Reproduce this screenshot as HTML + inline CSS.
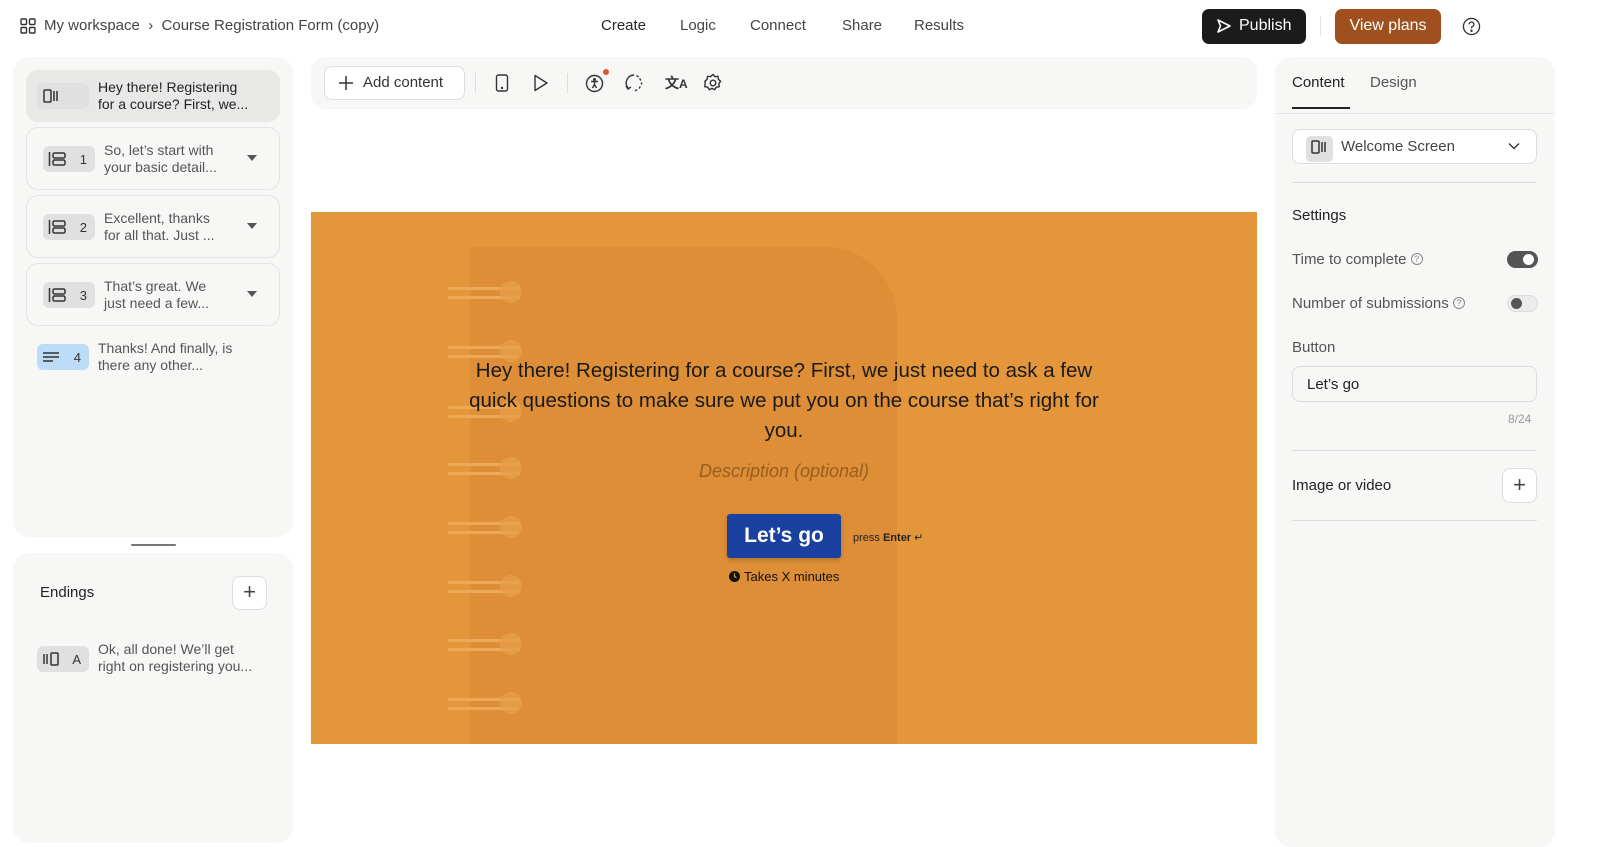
<!DOCTYPE html>
<html><head><meta charset="utf-8"><style>
*{box-sizing:border-box;margin:0;padding:0}
body{width:1600px;height:830px;background:#fff;font-family:"Liberation Sans",Arial,sans-serif;color:#222;position:relative;overflow:hidden}
.abs{position:absolute}
.panel{background:#f7f7f6;border-radius:16px}
.nav{font-size:15px;color:#262626}
.item{position:absolute;left:26px;width:254px;border-radius:12px;font-size:14px;color:#555;line-height:17px}
.item.b{border:1px solid #e3e3e3}
.badge{position:absolute;background:#e0e0e0;border-radius:6px;height:26px;width:52px}
.badge span{position:absolute;right:8px;top:5px;font-size:13px;color:#333}
.txt{position:absolute;left:77px}
.caret{position:absolute;right:22px;top:27px;width:0;height:0;border-left:5px solid transparent;border-right:5px solid transparent;border-top:6px solid #555}
.lbl{position:absolute;left:1292px;font-size:15px;color:#555}
.spiral{position:absolute;left:448px;width:72px;height:20px}
.spiral i{position:absolute;left:0;width:72px;height:3px;background:#eda858;border-radius:2px}
.spiral b{position:absolute;left:52px;top:-2px;width:22px;height:22px;border-radius:50%;background:#e79f4a;opacity:.8}
</style></head><body>
<svg class="abs" style="left:20px;top:18px" width="16" height="16" viewBox="0 0 16 16" fill="none" stroke="#333" stroke-width="1.4"><rect x="1" y="1" width="5.5" height="5.5" rx="1"/><rect x="9.5" y="1" width="5.5" height="5.5" rx="1"/><rect x="1" y="9.5" width="5.5" height="5.5" rx="1"/><rect x="9.5" y="9.5" width="5.5" height="5.5" rx="1"/></svg>
<div class="abs nav" style="left:44px;top:17px;color:#444">My workspace&nbsp;&nbsp;›&nbsp;&nbsp;Course Registration Form (copy)</div>
<div class="abs nav" style="left:601px;top:17px">Create</div>
<div class="abs nav" style="left:680px;top:17px;color:#444">Logic</div>
<div class="abs nav" style="left:750px;top:17px;color:#444">Connect</div>
<div class="abs nav" style="left:842px;top:17px;color:#444">Share</div>
<div class="abs nav" style="left:914px;top:17px;color:#444">Results</div>
<div class="abs" style="left:1202px;top:9px;width:104px;height:35px;background:#1b1b1b;border-radius:7px;color:#fff;font-size:16px;padding:8px 0 0 37px">Publish</div>
<svg class="abs" style="left:1216px;top:18px" width="16" height="16" viewBox="0 0 16 16" fill="none" stroke="#fff" stroke-width="1.6" stroke-linejoin="round"><path d="M2 2l12 6-12 6 2.5-6z"/></svg>
<div class="abs" style="left:1320px;top:16px;width:1px;height:20px;background:#e3e3e3"></div>
<div class="abs" style="left:1335px;top:9px;width:106px;height:35px;background:#a0501f;border-radius:7px;color:#fff;font-size:16px;text-align:center;padding-top:8px">View plans</div>
<svg class="abs" style="left:1462px;top:17px" width="19" height="19" viewBox="0 0 20 20" fill="none" stroke="#333" stroke-width="1.4"><circle cx="10" cy="10" r="8.5"/><path d="M7.5 7.8a2.5 2.5 0 1 1 3.3 2.3c-.6.3-.8.7-.8 1.4v.5"/><circle cx="10" cy="14.5" r=".6" fill="#333"/></svg>

<div class="abs panel" style="left:13px;top:57px;width:280px;height:480px"></div>
<div class="item" style="top:70px;height:52px;background:#e8e8e7">
 <div class="badge" style="left:11px;top:13px"></div>
 <svg class="abs" style="left:17px;top:19px" width="18" height="14" viewBox="0 0 18 14" fill="none" stroke="#333" stroke-width="1.5"><rect x="1" y="1" width="7" height="12" rx="1"/><path d="M11 2v10M14 2v10"/></svg>
 <div class="txt" style="left:72px;top:9px;color:#222">Hey there! Registering<br>for a course? First, we...</div>
</div>
<div class="item b" style="top:127px;height:63px">
 <div class="badge" style="left:16px;top:18px"><span>1</span></div>
 <svg class="abs" style="left:21px;top:24px" width="18" height="14" viewBox="0 0 18 14" fill="none" stroke="#333" stroke-width="1.5"><path d="M1.5 0v14"/><rect x="5" y="1" width="12" height="5" rx="1.5"/><rect x="5" y="8" width="12" height="5" rx="1.5"/></svg>
 <div class="txt" style="top:14px">So, let’s start with<br>your basic detail...</div><div class="caret"></div>
</div>
<div class="item b" style="top:195px;height:63px">
 <div class="badge" style="left:16px;top:18px"><span>2</span></div>
 <svg class="abs" style="left:21px;top:24px" width="18" height="14" viewBox="0 0 18 14" fill="none" stroke="#333" stroke-width="1.5"><path d="M1.5 0v14"/><rect x="5" y="1" width="12" height="5" rx="1.5"/><rect x="5" y="8" width="12" height="5" rx="1.5"/></svg>
 <div class="txt" style="top:14px">Excellent, thanks<br>for all that. Just ...</div><div class="caret"></div>
</div>
<div class="item b" style="top:263px;height:63px">
 <div class="badge" style="left:16px;top:18px"><span>3</span></div>
 <svg class="abs" style="left:21px;top:24px" width="18" height="14" viewBox="0 0 18 14" fill="none" stroke="#333" stroke-width="1.5"><path d="M1.5 0v14"/><rect x="5" y="1" width="12" height="5" rx="1.5"/><rect x="5" y="8" width="12" height="5" rx="1.5"/></svg>
 <div class="txt" style="top:14px">That’s great. We<br>just need a few...</div><div class="caret"></div>
</div>
<div class="item" style="top:331px;height:52px">
 <div class="badge" style="left:11px;top:13px;background:#bcdcf7"><span>4</span></div>
 <svg class="abs" style="left:17px;top:21px" width="16" height="10" viewBox="0 0 16 10" stroke="#333" stroke-width="1.5"><path d="M0 1h16M0 5h16M0 9h10"/></svg>
 <div class="txt" style="left:72px;top:9px">Thanks! And finally, is<br>there any other...</div>
</div>
<div class="abs" style="left:131px;top:544px;width:45px;height:2px;background:#777;border-radius:1px"></div>
<div class="abs panel" style="left:13px;top:553px;width:280px;height:290px"></div>
<div class="abs" style="left:40px;top:584px;font-size:15px;color:#222">Endings</div>
<div class="abs" style="left:232px;top:576px;width:35px;height:34px;border:1px solid #ddd;border-radius:8px;background:#fff;text-align:center;font-size:22px;line-height:30px;color:#444">+</div>
<div class="item" style="top:636px;height:46px">
 <div class="badge" style="left:11px;top:10px"><span>A</span></div>
 <svg class="abs" style="left:16px;top:16px" width="18" height="14" viewBox="0 0 18 14" fill="none" stroke="#333" stroke-width="1.5"><path d="M2 2v10M5 2v10"/><rect x="9" y="1" width="7" height="12" rx="1"/></svg>
 <div class="txt" style="left:72px;top:5px">Ok, all done! We’ll get<br>right on registering you...</div>
</div>

<div class="abs panel" style="left:311px;top:57px;width:946px;height:52px;border-radius:14px"></div>
<div class="abs" style="left:324px;top:66px;width:141px;height:34px;background:#fff;border:1px solid #ddd;border-radius:8px;font-size:15px;color:#333;padding:7px 0 0 38px">Add content</div>
<svg class="abs" style="left:339px;top:76px" width="14" height="14" stroke="#333" stroke-width="1.5"><path d="M7 0v14M0 7h14"/></svg>
<div class="abs" style="left:475px;top:73px;width:1px;height:20px;background:#ddd"></div>
<svg class="abs" style="left:495px;top:74px" width="14" height="18" fill="none" stroke="#333" stroke-width="1.4"><rect x="1.5" y="1" width="11" height="16" rx="2"/><circle cx="7" cy="14" r=".5" fill="#333"/></svg>
<svg class="abs" style="left:533px;top:74px" width="16" height="18" fill="none" stroke="#333" stroke-width="1.4" stroke-linejoin="round"><path d="M2 1.5l12 7.5-12 7.5z"/></svg>
<div class="abs" style="left:567px;top:73px;width:1px;height:20px;background:#ddd"></div>
<svg class="abs" style="left:585px;top:73px" width="20" height="20" fill="none" stroke="#333" stroke-width="1.4"><circle cx="9.5" cy="10.5" r="8"/><circle cx="9.5" cy="6.5" r=".8" fill="#333"/><path d="M6 8.5h7M9.5 8.5v3l-2 3.5M9.5 11.5l2 3.5"/></svg>
<div class="abs" style="left:603px;top:69px;width:6px;height:6px;border-radius:50%;background:#e0533a"></div>
<svg class="abs" style="left:624px;top:73px" width="20" height="20" fill="none" stroke="#333" stroke-width="1.4"><path d="M10 2a8 8 0 0 0-6 13"/><path d="M2 13l2 3 3-2"/><path d="M13 3l1 .5M16 6l.5 1M17.5 10v1M16 14l-.5 1M12.5 17l-1 .5" stroke-linecap="round"/></svg>
<div class="abs" style="left:665px;top:73px;font-size:14px;color:#333;font-weight:bold">文<span style="font-size:12px">A</span></div>
<svg class="abs" style="left:703px;top:73px" width="20" height="20" fill="none" stroke="#333" stroke-width="1.4"><circle cx="10" cy="10" r="2.8"/><path d="M10 1.5l2 2.2 3-.4.4 3 2.2 2-1.8 2.4.5 3-3 .5-1.7 2.5-2.6-1.4-2.6 1.4-1.7-2.5-3-.5.5-3L1.9 8.3l2.2-2 .4-3 3 .4z" stroke-linejoin="round"/></svg>

<div class="abs" style="left:311px;top:212px;width:946px;height:532px;background:#e4963a;overflow:hidden">
 <div class="abs" style="left:159px;top:35px;width:427px;height:520px;background:#dd8e37;border-top-right-radius:72px"></div>
</div>
<div class="spiral" style="top:283px"><i style="top:4px"></i><i style="top:13px"></i><b></b></div>
<div class="spiral" style="top:342px"><i style="top:4px"></i><i style="top:13px"></i><b></b></div>
<div class="spiral" style="top:402px"><i style="top:4px"></i><i style="top:13px"></i><b></b></div>
<div class="spiral" style="top:459px"><i style="top:4px"></i><i style="top:13px"></i><b></b></div>
<div class="spiral" style="top:518px"><i style="top:4px"></i><i style="top:13px"></i><b></b></div>
<div class="spiral" style="top:577px"><i style="top:4px"></i><i style="top:13px"></i><b></b></div>
<div class="spiral" style="top:635px"><i style="top:4px"></i><i style="top:13px"></i><b></b></div>
<div class="spiral" style="top:694px"><i style="top:4px"></i><i style="top:13px"></i><b></b></div>
<div class="abs" style="left:384px;top:356px;width:800px;text-align:center;font-size:20.5px;line-height:30px;color:#1a1a1a;white-space:nowrap">Hey there! Registering for a course? First, we just need to ask a few<br>quick questions to make sure we put you on the course that’s right for<br>you.</div>
<div class="abs" style="left:440px;top:461px;width:688px;text-align:center;font-size:18px;font-style:italic;color:#9a5d20">Description (optional)</div>
<div class="abs" style="left:727px;top:514px;width:114px;height:44px;background:#1a40a0;border-radius:3px;color:#fff;font-weight:bold;font-size:21px;text-align:center;line-height:44px;box-shadow:0 2px 4px rgba(0,0,0,.2)">Let’s go</div>
<div class="abs" style="left:853px;top:531px;font-size:11px;color:#222">press <b>Enter</b> ↵</div>
<svg class="abs" style="left:729px;top:571px" width="11" height="11"><circle cx="5.5" cy="5.5" r="5.5" fill="#111"/><path d="M5.5 2.5v3.2l2 1" stroke="#e4963a" stroke-width="1.2" fill="none"/></svg>
<div class="abs" style="left:744px;top:569px;font-size:13px;color:#111">Takes X minutes</div>

<div class="abs panel" style="left:1275px;top:57px;width:280px;height:790px"></div>
<div class="abs" style="left:1275px;top:113px;width:280px;height:1px;background:#e6e6e6"></div>
<div class="abs" style="left:1292px;top:74px;font-size:15px;color:#222">Content</div>
<div class="abs" style="left:1292px;top:107px;width:58px;height:2px;background:#222"></div>
<div class="abs" style="left:1370px;top:74px;font-size:15px;color:#555">Design</div>
<div class="abs" style="left:1292px;top:129px;width:245px;height:35px;background:#fff;border:1px solid #ddd;border-radius:8px"></div>
<div class="abs" style="left:1306px;top:136px;width:27px;height:26px;background:#e0e0e0;border-radius:5px"></div>
<svg class="abs" style="left:1311px;top:140px" width="18" height="14" fill="none" stroke="#333" stroke-width="1.5"><rect x="1" y="1" width="7" height="12" rx="1"/><path d="M11 2v10M14 2v10"/></svg>
<div class="abs" style="left:1341px;top:138px;font-size:15px;color:#444">Welcome Screen</div>
<svg class="abs" style="left:1508px;top:142px" width="12" height="8" fill="none" stroke="#333" stroke-width="1.4"><path d="M1 1.5l5 5 5-5"/></svg>
<div class="abs" style="left:1292px;top:182px;width:245px;height:1px;background:#ddd"></div>
<div class="abs" style="left:1292px;top:207px;font-size:15px;color:#222">Settings</div>
<div class="lbl" style="top:251px">Time to complete <span style="border:1px solid #888;border-radius:50%;display:inline-block;width:12px;height:12px;text-align:center;line-height:11px;color:#888;font-size:9px;vertical-align:2px">?</span></div>
<div class="abs" style="left:1507px;top:251px;width:31px;height:17px;background:#555;border-radius:9px"><div class="abs" style="left:16px;top:3px;width:11px;height:11px;background:#fff;border-radius:50%"></div></div>
<div class="lbl" style="top:295px">Number of submissions <span style="border:1px solid #888;border-radius:50%;display:inline-block;width:12px;height:12px;text-align:center;line-height:11px;color:#888;font-size:9px;vertical-align:2px">?</span></div>
<div class="abs" style="left:1507px;top:295px;width:31px;height:17px;background:#ebebeb;border:1px solid #ddd;border-radius:9px"><div class="abs" style="left:3px;top:2px;width:11px;height:11px;background:#555;border-radius:50%"></div></div>
<div class="lbl" style="top:339px">Button</div>
<div class="abs" style="left:1292px;top:366px;width:245px;height:36px;border:1px solid #ddd;border-radius:8px;background:#f7f7f6;font-size:15px;color:#222;padding:9px 0 0 14px">Let’s go</div>
<div class="abs" style="left:1508px;top:412px;font-size:12px;color:#999">8/24</div>
<div class="abs" style="left:1292px;top:450px;width:245px;height:1px;background:#ddd"></div>
<div class="abs" style="left:1292px;top:477px;font-size:15px;color:#222">Image or video</div>
<div class="abs" style="left:1502px;top:468px;width:35px;height:35px;border:1px solid #ddd;border-radius:8px;background:#fff;text-align:center;font-size:22px;line-height:31px;color:#444">+</div>
<div class="abs" style="left:1292px;top:520px;width:245px;height:1px;background:#ddd"></div>
</body></html>
